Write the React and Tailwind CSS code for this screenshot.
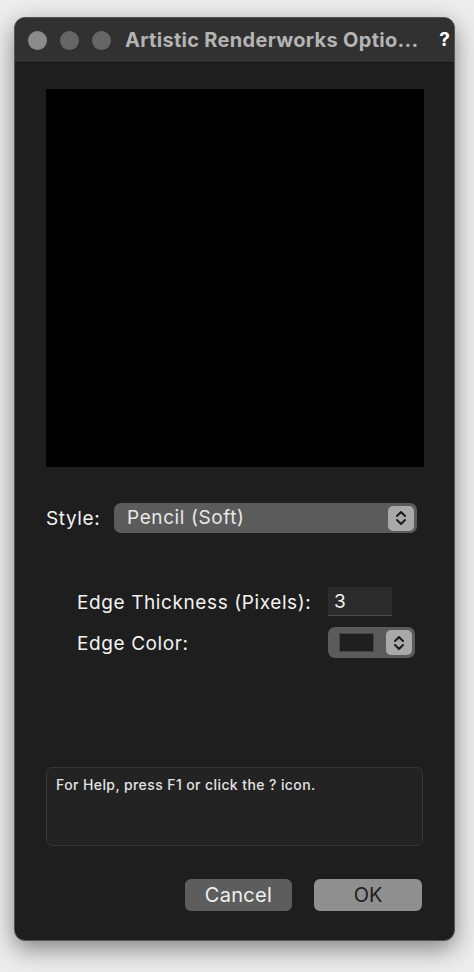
import React from 'react';

function Stepper({ className }) {
  return (
    <div className={`flex items-center justify-center rounded-[5px] bg-[#a9a9a9] ${className}`}>
      <svg width="14" height="20" viewBox="0 0 14 20" fill="none" stroke="#1c1c1c" strokeWidth="2" strokeLinecap="round" strokeLinejoin="round">
        <path d="M3 8 L7 4 L11 8" />
        <path d="M3 12 L7 16 L11 12" />
      </svg>
    </div>
  );
}

function App() {
  return (
    <div className="min-h-[972px] w-[474px] bg-[#ededed] pt-[17px] pl-[14px]" style={{ fontFamily: 'Inter, "Liberation Sans", sans-serif' }}>
      <div className="w-[441px] h-[924px] flex flex-col rounded-[11px] bg-[#1e1e1e] border border-[#555] shadow-[0_8px_24px_rgba(0,0,0,0.45)] overflow-hidden">
        {/* title bar */}
        <div className="h-[45px] shrink-0 flex items-center bg-[#313131] border-b border-[#151515] pl-[13px] pr-[4px]">
          <div className="flex gap-[13px]">
            <span className="w-[19px] h-[19px] rounded-full bg-[#8b8b8b]" />
            <span className="w-[19px] h-[19px] rounded-full bg-[#666]" />
            <span className="w-[19px] h-[19px] rounded-full bg-[#666]" />
          </div>
          <div className="ml-[14px] text-[20px] font-bold tracking-[0.3px] text-[#b4b4b4] whitespace-nowrap">Artistic Renderworks Optio...</div>
          <div className="ml-auto text-[19px] font-bold text-white">?</div>
        </div>

        {/* body */}
        <div className="flex flex-col pl-[31px] pr-[31px] pt-[26px]">
          <div className="w-[378px] h-[378px] bg-black" />

          <div className="mt-[36px] flex items-center h-[30px] text-[19px] tracking-[0.6px]">
            <span className="w-[68px] pt-[2px] text-[#f2f2f2]">Style:</span>
            <div className="w-[303px] h-[30px] rounded-[7px] bg-[#5b5b5b] flex items-center pl-[13px] pr-[3px]">
              <span className="text-[#e8e8e8]">Pencil (Soft)</span>
              <Stepper className="ml-auto w-[26px] h-[25px]" />
            </div>
          </div>

          <div className="mt-[54px] pl-[31px] flex items-center h-[29px] text-[19px] tracking-[0.6px]">
            <span className="text-[#f2f2f2] w-[251px] pt-[4px]">Edge Thickness (Pixels):</span>
            <div className="w-[64px] h-[29px] bg-[#2b2b2b] border-b border-[#4a4a4a] flex items-center pl-[6px] pt-[3px] text-[#f2f2f2]">3</div>
          </div>

          <div className="mt-[11px] pl-[31px] flex items-center h-[31px] text-[19px] tracking-[0.6px]">
            <span className="text-[#f2f2f2] w-[251px] pt-[4px]">Edge Color:</span>
            <div className="w-[87px] h-[31px] rounded-[7px] bg-[#5b5b5b] flex items-center pl-[11px] pr-[3px]">
              <div className="w-[35px] h-[19px] bg-[#1f1f1f] border border-[#444]" />
              <Stepper className="ml-auto w-[26px] h-[25px]" />
            </div>
          </div>

          <div className="mt-[109px] h-[79px] rounded-[6px] bg-[#232323] border border-[#363636] pl-[9px] pt-[4px]">
            <span className="text-[14px] font-medium tracking-[0.4px] text-[#e2e2e2]">For Help, press F1 or click the ? icon.</span>
          </div>

          <div className="mt-[33px] flex justify-end gap-[22px] pr-[1px]">
            <button className="w-[107px] h-[32px] rounded-[6px] bg-[#5d5d5d] text-[20px] tracking-[0.3px] text-[#f0f0f0]">Cancel</button>
            <button className="w-[108px] h-[32px] rounded-[6px] bg-[#8f8f8f] text-[20px] text-[#1e1e1e]">OK</button>
          </div>
        </div>
      </div>
    </div>
  );
}

export default App;
